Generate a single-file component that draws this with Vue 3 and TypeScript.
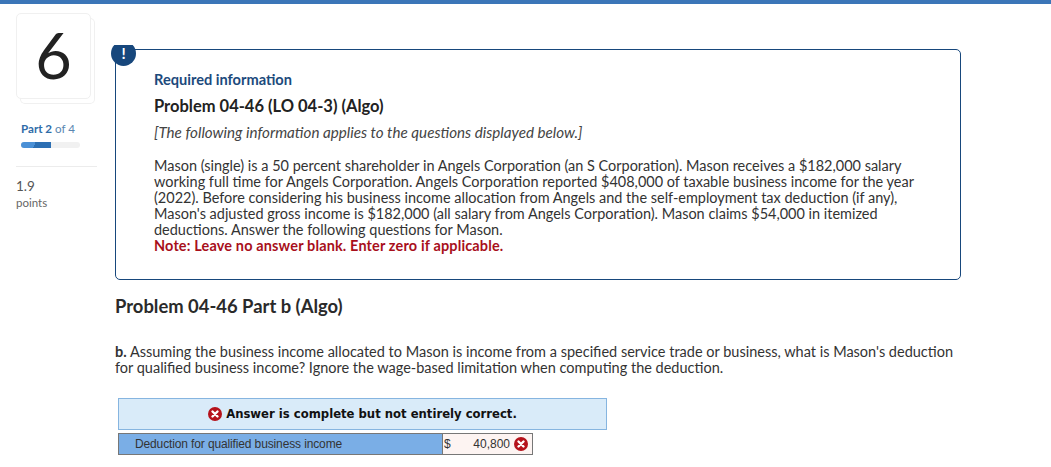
<template>
  <div class="page">
    <div class="topbar"></div>
    <div class="layout">
      <aside class="side">
        <div class="num-card"><div class="num-front">6</div></div>
        <div class="part"><b>Part 2</b> of 4</div>
        <div class="progress"><div class="progress-fill" :style="{ width: partPercent + '%' }"></div></div>
        <div class="points-val">1.9</div>
        <div class="points-lbl">points</div>
      </aside>
      <main class="main">
        <section class="info-box">
          <div class="badge-clip"><div class="badge">!</div></div>
          <div class="req">Required information</div>
          <h2 class="prob-title">Problem 04-46 (LO 04-3) (Algo)</h2>
          <p class="intro">[The following information applies to the questions displayed below.]</p>
          <p class="body">Mason (single) is a 50 percent shareholder in Angels Corporation (an S Corporation). Mason receives a $182,000 salary<br>working full time for Angels Corporation. Angels Corporation reported $408,000 of taxable business income for the year<br>(2022). Before considering his business income allocation from Angels and the self-employment tax deduction (if any),<br>Mason's adjusted gross income is $182,000 (all salary from Angels Corporation). Mason claims $54,000 in itemized<br>deductions. Answer the following questions for Mason.<br><strong class="note">Note: Leave no answer blank. Enter zero if applicable.</strong></p>
        </section>
        <h2 class="part-title">Problem 04-46 Part b (Algo)</h2>
        <p class="question"><b>b.</b> Assuming the business income allocated to Mason is income from a specified service trade or business, what is Mason's deduction<br>for qualified business income? Ignore the wage-based limitation when computing the deduction.</p>
        <div class="result-bar">
          <svg class="x-icon" viewBox="0 0 14 14"><circle cx="7" cy="7" r="7" fill="#b5121b"/><path d="M4.500 4.500l5 5M9.500 4.500l-5 5" stroke="#fff" stroke-width="2.400" stroke-linecap="round"/></svg>
          <span>Answer is complete but not entirely correct.</span>
        </div>
        <div class="answer-row">
          <div class="answer-label">Deduction for qualified business income</div>
          <div class="answer-cell">
            <span>$</span>
            <span class="answer-val">40,800</span>
            <svg class="x-icon" viewBox="0 0 14 14"><circle cx="7" cy="7" r="7" fill="#b5121b"/><path d="M4.500 4.500l5 5M9.500 4.500l-5 5" stroke="#fff" stroke-width="2.400" stroke-linecap="round"/></svg>
          </div>
        </div>
      </main>
    </div>
  </div>
</template>

<script setup lang="ts">
const partPercent: number = 50
</script>

<style>
html, body { margin: 0; background: #fff; overflow: hidden; }
</style>

<style scoped>
.page {
  width: 1051px;
  height: 467px;
  overflow: hidden;
  font-family: Lato, "Open Sans", sans-serif;
  color: #333;
}
.topbar {
  height: 4px;
  background: #3b76b8;
}
.layout {
  display: flex;
  padding-left: 16px;
}
.side {
  width: 81px;
  margin-right: 18px;
  padding-top: 9px;
}
.num-card {
  width: 73px;
  height: 84px;
  border: 1px solid #f0f0f0;
  border-radius: 5px;
  box-shadow: 4px 5px 0 -1px #fff, 4px 5px 0 0 #f0f0f0;
  background: #fff;
}
.num-front {
  font-size: 63px;
  line-height: 82px;
  text-align: center;
  color: #222;
  font-weight: 400;
}
.part {
  margin: 23px 0 0 5px;
  font-size: 11.600px;
  line-height: 14px;
  color: #5a86b0;
}
.part b { color: #2f6ca8; }
.progress {
  width: 59px;
  height: 6px;
  margin: 6px 0 0 5px;
  background: #f1f1f1;
  border-radius: 3px;
  overflow: hidden;
}
.progress-fill {
  height: 100%;
  background: linear-gradient(110deg, #4a90d6 0 45%, #2c6fb3 45%);
}
.points-val {
  border-top: 1px solid #ececec;
  margin-top: 18px;
  padding-top: 12px;
  font-size: 13.500px;
  line-height: 15px;
  color: #555;
}
.points-lbl {
  font-size: 11.500px;
  line-height: 14px;
  color: #666;
  margin-top: 2px;
}
.main {
  width: 846px;
}
.info-box {
  position: relative;
  box-sizing: border-box;
  margin-top: 45px;
  height: 231px;
  border: 1px solid #17477c;
  border-radius: 5px;
  padding: 21px 38px 0;
}
.badge-clip {
  position: absolute;
  left: -5px;
  top: -5px;
  width: 26px;
  height: 21px;
  overflow: hidden;
}
.badge {
  width: 25px;
  height: 25px;
  margin-top: -4px;
  border-radius: 50%;
  background: #17477c;
  color: #fff;
  font-size: 15px;
  font-weight: 700;
  line-height: 24px;
  text-align: center;
}
.req {
  font-size: 14.600px;
  font-weight: 700;
  line-height: 18px;
  color: #1c4a7c;
}
.prob-title {
  margin: 7px 0 0;
  font-size: 16.500px;
  font-weight: 700;
  line-height: 20px;
  color: #222;
}
.intro {
  margin: 7px 0 0;
  font-size: 15.200px;
  font-style: italic;
  line-height: 18px;
  color: #444;
}
.body {
  margin: 17px 0 0;
  font-size: 14.470px;
  line-height: 16px;
  color: #333;
  white-space: nowrap;
}
.note {
  color: #a80f1b;
  font-weight: 700;
  letter-spacing: 0.150px;
}
.part-title {
  margin: 16px 0 0;
  font-size: 18.400px;
  font-weight: 700;
  line-height: 20px;
  color: #2a2a2a;
}
.question {
  margin: 28px 0 0;
  font-size: 14.500px;
  line-height: 16px;
  color: #333;
  white-space: nowrap;
}
.result-bar {
  box-sizing: border-box;
  display: flex;
  align-items: center;
  justify-content: center;
  gap: 4px;
  width: 489px;
  height: 32px;
  margin: 22px 0 0 3px;
  background: #d9ebf9;
  border: 1px solid #86b5e0;
  font-family: "DejaVu Sans", sans-serif;
  font-size: 11.650px;
  font-weight: 700;
  color: #111;
}
.x-icon {
  width: 14px;
  height: 14px;
  flex: none;
}
.answer-row {
  box-sizing: border-box;
  display: flex;
  width: 415px;
  height: 22px;
  margin: 3px 0 0 3px;
  border: 1px solid #777;
  font-family: "Liberation Sans", Arial, sans-serif;
  font-size: 12px;
  color: #333;
}
.answer-label {
  width: 324px;
  box-sizing: border-box;
  padding-left: 16px;
  letter-spacing: -0.130px;
  line-height: 20px;
  background: #7aaee6;
  border-right: 1px solid #777;
}
.answer-cell {
  flex: 1;
  display: flex;
  align-items: center;
  padding: 0 4px 0 1px;
  background: #fdf4f2;
}
.answer-val {
  margin-left: auto;
  margin-right: 4px;
}
</style>
